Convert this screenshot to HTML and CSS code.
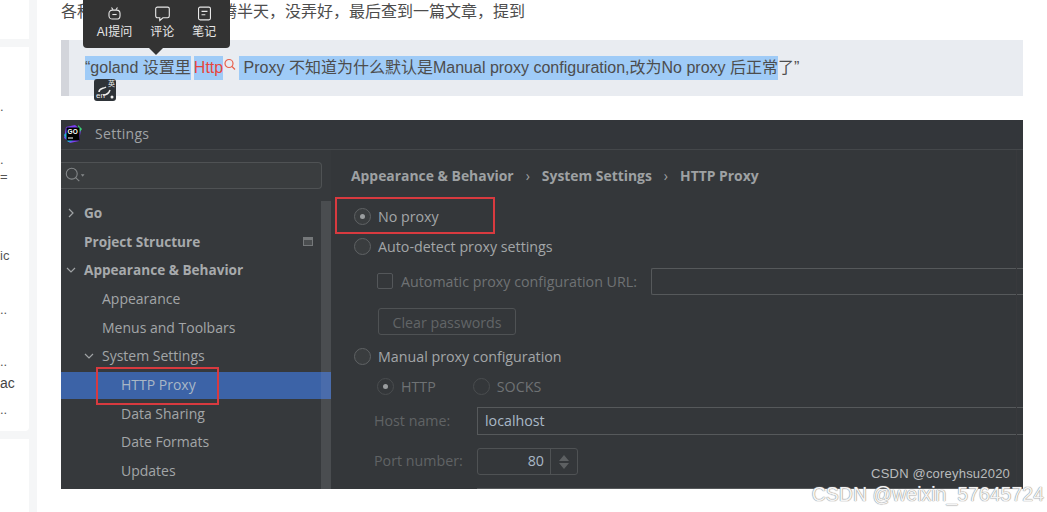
FILE: index.html
```html
<!DOCTYPE html>
<html lang="zh">
<head>
<meta charset="utf-8">
<title>Settings</title>
<link rel="stylesheet" href="styles.css">
</head>
<body>
<div class="page">
  <aside class="side">
    <div class="card c1"></div>
    <div class="card c2">
      <span>.</span><span>.</span><span>=</span><span>ic</span><span>..</span><span>..</span><span class="big">ac</span><span>..</span>
    </div>
    <div class="card c3"></div>
  </aside>
  <main class="main">
    <p class="para">各种方法配置代理都折腾半天，没弄好，最后查到一篇文章，提到</p>
    <div class="pop">
      <div class="pop-item">
        <svg class="pop-icon" viewBox="0 0 20 20" fill="none" stroke="#e8e8e8" stroke-width="1.3"><path d="M6.5 3l1.8 2.6M13.5 3l-1.8 2.6"/><rect x="3.5" y="6" width="13" height="10.5" rx="4"/><path d="M7.5 11.2h5"/></svg>
        <span>AI提问</span>
      </div>
      <div class="pop-item">
        <svg class="pop-icon" viewBox="0 0 20 20" fill="none" stroke="#e8e8e8" stroke-width="1.3"><path d="M4 2.5h12a2 2 0 0 1 2 2v8.5a2 2 0 0 1-2 2h-5.5l-3.7 3.2v-3.2H4a2 2 0 0 1-2-2V4.500a2 2 0 0 1 2-2z"/></svg>
        <span>评论</span>
      </div>
      <div class="pop-item">
        <svg class="pop-icon" viewBox="0 0 20 20" fill="none" stroke="#e8e8e8" stroke-width="1.3"><rect x="3" y="2.500" width="14" height="15" rx="1.800"/><path d="M6.500 7.500h7M6.500 11.500h4.500"/></svg>
        <span>笔记</span>
      </div>
    </div>
    <blockquote class="quote"><span class="sel">“goland 设置里</span><span class="sel red gap">Http</span><svg class="lens" viewBox="0 0 14 14" fill="none" stroke="#e8604c" stroke-width="1.2"><circle cx="6" cy="5.500" r="4"/><path d="M9 8.500l3 3"/></svg><span class="sel gap">&nbsp;Proxy 不知道为什么默认是Manual proxy configuration,改为No proxy 后正常</span>了”<span class="tr"><svg viewBox="0 0 22 22" fill="none"><path d="M5 13c0-4 4-3 7-5" stroke="#eee" stroke-width="1.500"/><path d="M9 16c4 0 6-2 7-5" stroke="#eee" stroke-width="1.500"/><circle cx="18" cy="18" r="1.500" fill="#eee"/></svg><b class="tr-zh">英</b><b class="tr-en">en</b></span></blockquote>
    <section class="shot">
      <header class="title">
        <svg class="logo" viewBox="0 0 20 20"><path d="M3 3l9-2 6 5-2 11-9 2-6-5z" fill="#7a3ff0"/><path d="M1 11l4 7 5-1-6-9z" fill="#1fb6d8"/><path d="M15 1l4 4-3 4z" fill="#3ad47a"/><rect x="3.500" y="3.500" width="13" height="13" fill="#000"/><rect x="5" y="13.500" width="5" height="1" fill="#fff"/><text x="4.500" y="10" class="logo-t">GO</text></svg>
        <span>Settings</span>
      </header>
      <div class="body">
        <nav class="tree">
          <div class="search">
            <svg class="s-icon" viewBox="0 0 18 14" fill="none" stroke="#85888a" stroke-width=".9"><circle cx="5.500" cy="5.500" r="4.500"/><path d="M8.700 8.700l3 3"/><path d="M13 6h3l-1.500 2z" fill="#85888a" stroke="none"/></svg>
          </div>
          <div class="row b l0"><svg class="chev" viewBox="0 0 10 10" fill="none" stroke="#a0a3a5" stroke-width="1.200"><path d="M3 1l4 4-4 4"/></svg>Go</div>
          <div class="row b l0 between">Project Structure<span class="win"></span></div>
          <div class="row b l0"><svg class="chev" viewBox="0 0 10 10" fill="none" stroke="#a0a3a5" stroke-width="1.200"><path d="M1 3l4 4 4-4"/></svg>Appearance &amp; Behavior</div>
          <div class="row l1">Appearance</div>
          <div class="row l1">Menus and Toolbars</div>
          <div class="row l1"><svg class="chev" viewBox="0 0 10 10" fill="none" stroke="#a0a3a5" stroke-width="1.200"><path d="M1 3l4 4 4-4"/></svg>System Settings</div>
          <div class="row l2 on">HTTP Proxy</div>
          <div class="row l2">Data Sharing</div>
          <div class="row l2">Date Formats</div>
          <div class="row l2">Updates</div>
          <div class="bar"></div>
          <div class="mark mark-http"></div>
        </nav>
        <div class="pane">
          <div class="crumb"><span>Appearance &amp; Behavior</span><i>›</i><span>System Settings</span><i>›</i><span>HTTP Proxy</span></div>
          <div class="line"><span class="radio checked"></span>No proxy</div>
          <div class="line m2"><span class="radio"></span>Auto-detect proxy settings</div>
          <div class="line m7 sub dim"><span class="check"></span>Automatic proxy configuration URL:<span class="input url"></span></div>
          <div class="btn">Clear passwords</div>
          <div class="line m7"><span class="radio"></span>Manual proxy configuration</div>
          <div class="line m2 sub dim"><span class="radio checked small"></span>HTTP<span class="radio small socks"></span>SOCKS</div>
          <div class="field host"><label>Host name:</label><span class="input val">localhost</span></div>
          <div class="field port"><label>Port number:</label><span class="input num"><span class="num-v">80</span><span class="spin"><svg viewBox="0 0 12 20"><path d="M6 3l5 6H1zM6 17l5-6H1z" fill="#5d6062"/></svg></span></span></div>
          <div class="next"></div>
          <div class="mark mark-no"></div>
          <div class="edge"></div>
          <div class="credit">CSDN @coreyhsu2020</div>
        </div>
      </div>
    </section>
  </main>
  <div class="wm">CSDN @weixin_57645724</div>
</div>
</body>
</html>
```
FILE: styles.css
```css
* { box-sizing: border-box; }
html, body { margin: 0; padding: 0; }
body { background: #f5f6f7; font-family: "Liberation Sans", "Noto Sans CJK SC", sans-serif; overflow: hidden; }
.page { position: relative; display: flex; width: 1047px; height: 512px; overflow: hidden; }

.side { width: 29px; display: flex; flex-direction: column; gap: 8px; flex: none; margin-right: 8px; }
.card { background: #fff; overflow: hidden; }
.c1 { height: 39px; }
.c2 { height: 384px; display: grid; grid-template-rows: 68px 53px 17px 79px 54px 52px 21px 27px; font-size: 13px; line-height: 16px; color: #555; border-radius: 0 0 4px 0; }
.c2 span { align-self: end; white-space: nowrap; }
.c2 .big { font-size: 14px; color: #444; }
.c3 { flex: 1; }

.main { position: relative; flex: 1; background: #fff; padding: 0 24px; }
.para { margin: 0; padding-top: 1px; height: 22px; font-size: 16px; line-height: 21px; color: #4d4d4d; white-space: nowrap; }

.pop { position: absolute; left: 46px; top: 0; width: 147px; height: 48px; background: #333; border-radius: 0 0 4px 4px; display: flex; justify-content: center; gap: 18px; padding-top: 5px; z-index: 3; }
.pop::after { content: ""; position: absolute; left: 66px; bottom: -7px; border: 7px solid transparent; border-bottom-width: 0; border-top-color: #333; }
.pop-item { display: flex; flex-direction: column; align-items: center; color: #e8e8e8; font-size: 12px; line-height: 16px; }
.pop-icon { width: 17px; height: 17px; margin-bottom: 2px; }

.quote { position: relative; margin: 18px 0 0; height: 56px; background: #e9ecf1; border-left: 8px solid #d3d5db; padding: 16px 0 0 16px; font-size: 16px; line-height: 24px; color: #4d4d4d; white-space: nowrap; }
.sel { background: #9fcbf7; display: inline-block; height: 24px; }
.gap { margin-left: 2px; }
.red { color: #e8453c; margin-left: 3px; }
.lens { width: 14px; height: 14px; vertical-align: 1px; }
.tr { position: absolute; left: 25px; top: 39px; width: 22px; height: 22px; background: #2e3338; border-radius: 3px; }
.tr svg { width: 22px; height: 22px; display: block; }
.tr-zh, .tr-en { position: absolute; font-weight: 400; color: #eee; font-size: 7px; line-height: 8px; }
.tr-zh { right: 1px; top: 1px; }
.tr-en { left: 2px; bottom: 1px; font-size: 8px; }

.shot { margin-top: 24px; height: 369px; background: #33363a; display: flex; flex-direction: column; font-family: "Open Sans", "Noto Sans", sans-serif; overflow: hidden; }
.title { height: 30px; flex: none; display: flex; align-items: center; gap: 12px; padding: 0 0 2px 2px; border-bottom: 1px solid #44474a; color: #a0a3a5; font-size: 14px; letter-spacing: .3px; }
.logo { width: 20px; height: 20px; }
.logo-t { font: 700 6.500px "Liberation Sans", sans-serif; fill: #fff; }
.body { flex: 1; display: flex; min-height: 0; }

.tree { position: relative; width: 270px; flex: none; padding-top: 12px; background: #36393c; font-size: 14px; color: #a3a6a8; }
.search { width: 261px; height: 27px; border: 1px solid #4f5254; border-left: 0; border-radius: 0 4px 4px 0; background: #3a3d3f; margin-bottom: 9.200px; display: flex; align-items: center; padding-left: 4px; }
.s-icon { width: 22px; height: 17px; }
.row { position: relative; height: 28.670px; display: flex; align-items: center; white-space: nowrap; z-index: 1; }
.row.b { font-weight: 700; font-size: 13.600px; color: #a7aaac; }
.l0 { padding-left: 23px; }
.l1 { padding-left: 41px; }
.l2 { padding-left: 60px; }
.between { justify-content: space-between; padding-right: 18px; }
.on { background: linear-gradient(90deg, #3c63a7 260px, #4a6cab 260px) 0 2px / 100% 28px no-repeat; color: #a9b7c6; }
.chev { position: absolute; width: 10px; height: 10px; margin-left: -18px; }
.win { width: 10px; height: 9px; background: #4a4d4f; border: 1px solid #75787a; border-top-width: 3px; }
.bar { position: absolute; left: 260px; top: 51px; bottom: 0; width: 10px; background: #4a4d50; }
.mark { position: absolute; border: 2.500px solid #d83a3f; z-index: 2; }
.mark-http { left: 35px; top: 217px; width: 123px; height: 38px; }

.pane { position: relative; flex: 1; min-width: 0; padding-left: 20px; background: #34373a; display: flex; flex-direction: column; font-size: 14.250px; color: #a3a6a8; }
.crumb { height: 50px; margin-bottom: 2px; flex: none; display: flex; align-items: center; gap: 12px; font-size: 13.900px; font-weight: 700; color: #9ea1a3; white-space: nowrap; }
.crumb i { font-style: normal; font-weight: 400; }
.line { height: 28px; flex: none; display: flex; align-items: center; white-space: nowrap; }
.m2 { margin-top: 2px; }
.m7 { margin-top: 7px; }
.sub { padding-left: 26px; }
.dim { color: #6f7274; }
.radio { width: 17px; height: 17px; margin: 0 7px 0 3px; border: 1px solid #5f6264; border-radius: 50%; background: #3a3d3f; flex: none; position: relative; }
.radio.checked::after { content: ""; position: absolute; left: 5px; top: 5px; width: 5px; height: 5px; border-radius: 50%; background: #9a9d9f; }
.small { margin-left: 0; border-color: #4a4d4f; background: none; }
.socks { margin-left: 37px; }
.check { width: 16px; height: 16px; border: 1px solid #54575a; border-radius: 2px; margin-right: 8px; flex: none; }
.input { display: flex; align-items: center; border: 1px solid #56595b; height: 27px; color: #a9b7c6; }
.url { flex: 1; margin-left: 14px; border-right: 0; border-radius: 2px 0 0 2px; }
.btn { margin: 13px 0 0 27px; width: 138px; height: 27px; flex: none; border: 1px solid #4f5254; border-radius: 3px; display: flex; align-items: center; justify-content: center; padding-top: 1px; color: #626567; }
.field { display: flex; align-items: center; flex: none; }
.field label { width: 103px; margin-left: 23px; flex: none; color: #606365; padding-bottom: 2px; }
.host { height: 28px; margin-top: 7px; }
.val { flex: 1; height: 28px; padding: 0 0 2px 7px; border-right: 0; }
.port { height: 27px; margin-top: 13px; }
.num { width: 101px; border-radius: 3px; border-color: #4f5254; }
.num-v { flex: 1; text-align: right; padding-right: 6px; border-right: 1px solid #4f5254; height: 100%; line-height: 24px; }
.spin { width: 26px; height: 100%; display: flex; align-items: center; justify-content: center; }
.spin svg { width: 12px; height: 20px; }
.next { margin: 13px 0 0 126px; height: 1px; background: #56595b; flex: none; }
.mark-no { left: 4px; top: 47px; width: 160px; height: 37px; }
.edge { position: absolute; right: 6px; top: 0; bottom: 0; width: 1px; background: #38393c; }
.credit { position: absolute; right: 13px; bottom: 7px; font: 13px/16px "Liberation Sans", sans-serif; color: #b9bbbd; letter-spacing: .2px; }

.wm { position: absolute; right: 3px; bottom: 6px; font-size: 19.500px; line-height: 24px; color: #f4f4f4; white-space: nowrap; text-shadow: 0 0 1px #8a8a8a, 0 0 1px #8a8a8a; z-index: 4; }
```
